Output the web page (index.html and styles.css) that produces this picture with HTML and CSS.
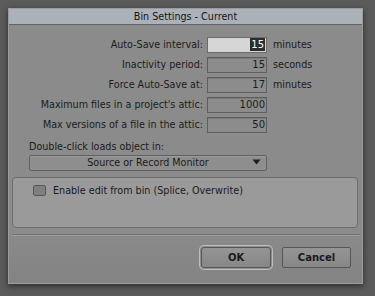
FILE: index.html
```html
<!DOCTYPE html>
<html>
<head>
<meta charset="utf-8">
<link rel="stylesheet" href="styles.css">
</head>
<body>
<div class="dialog">
  <div class="titlebar">Bin Settings - Current</div>
  <div class="content">
    <div class="fields">
      <div class="label">Auto-Save interval:</div>
      <div class="field active"><span class="sel">15</span></div>
      <div class="unit">minutes</div>

      <div class="label">Inactivity period:</div>
      <div class="field">15</div>
      <div class="unit">seconds</div>

      <div class="label">Force Auto-Save at:</div>
      <div class="field">17</div>
      <div class="unit">minutes</div>

      <div class="label">Maximum files in a project's attic:</div>
      <div class="field">1000</div>
      <div class="unit"></div>

      <div class="label">Max versions of a file in the attic:</div>
      <div class="field">50</div>
      <div class="unit"></div>
    </div>
    <div class="dbl-label">Double-click loads object in:</div>
    <div class="dropdown">
      <span>Source or Record Monitor</span>
      <svg class="arrow" width="9" height="6" viewBox="0 0 9 6"><path d="M0.5 0.5 H8.5 L4.5 5.5 Z" fill="#1e1e1e"/></svg>
    </div>
    <div class="group">
      <div class="check-row">
        <span class="checkbox"></span>
        <span class="check-label">Enable edit from bin (Splice, Overwrite)</span>
      </div>
    </div>
    <div class="separator"></div>
    <div class="footer">
      <div class="btn default">OK</div>
      <div class="btn">Cancel</div>
    </div>
  </div>
</div>
</body>
</html>
```
FILE: styles.css
```css
html, body {
  margin: 0;
  height: 296px;
  overflow: hidden;
}
body {
  background: #5b5b5b;
  padding: 8px 0 0 8px;
  box-sizing: border-box;
  font-family: "DejaVu Sans", sans-serif;
  font-size: 9.6px;
  color: #1b1b1b;
}
.dialog {
  width: 355px;
  height: 276px;
  box-sizing: border-box;
  border: 1px solid #9c9c9c;
  background: #8b8b8b;
  box-shadow: 0 2px 6px rgba(0,0,0,0.55);
  display: flex;
  flex-direction: column;
}
.titlebar {
  height: 15px;
  line-height: 15px;
  text-align: center;
  background: #aab1b9;
  border-bottom: 1px solid #5f6368;
  color: #151515;
}
.content {
  padding-top: 12px;
  flex: 1;
  display: flex;
  flex-direction: column;
}
.fields {
  display: grid;
  grid-template-columns: 194px 60px auto;
  grid-auto-rows: 16px;
  column-gap: 4px;
  row-gap: 4px;
}
.label {
  text-align: right;
  line-height: 16px;
}
.unit {
  line-height: 16px;
  padding-left: 2px;
}
.field {
  box-sizing: border-box;
  border: 1px solid #5e5e5e;
  background: #8c8c8c;
  box-shadow: inset 0 1px 0 #7a7a7a;
  text-align: right;
  padding-right: 1px;
  line-height: 14px;
  font-size: 10px;
}
.field.active {
  background: #d5d5d5;
  border-color: #6a6a6a;
  box-shadow: none;
}
.sel {
  background: #2c2c2c;
  color: #fff;
  padding: 1px 1px;
}
.dbl-label {
  margin: 8px 0 0 20px;
  line-height: 12px;
}
.dropdown {
  margin: 2px 0 0 20px;
  width: 238px;
  height: 16px;
  box-sizing: border-box;
  border: 1px solid #606060;
  border-radius: 2px;
  background: #8e8e8e;
  box-shadow: inset 0 1px 0 #999;
  text-align: center;
  line-height: 14px;
  position: relative;
}
.dropdown .arrow {
  position: absolute;
  right: 5px;
  top: 3px;
}
.group {
  margin: 6px 0 0 3px;
  width: 346px;
  height: 51px;
  box-sizing: border-box;
  border: 1px solid #6c6c6c;
  border-radius: 4px;
  background: #9a9a9a;
  padding: 6px 0 0 20px;
}
.check-row {
  display: flex;
  align-items: center;
  gap: 7px;
  height: 12px;
}
.checkbox {
  width: 13px;
  height: 11px;
  box-sizing: border-box;
  border: 1px solid #585858;
  border-radius: 2px;
  background: #7f7f7f;
}
.separator {
  margin: 6px 0 0 3px;
  width: 348px;
  height: 0;
  border-top: 1px solid #747474;
  border-bottom: 1px solid #9e9e9e;
}
.footer {
  flex: 1;
  display: flex;
  justify-content: flex-end;
  gap: 11px;
  padding: 11px 11px 0 0;
  background: linear-gradient(#8a8a8a, #838383);
}
.btn {
  width: 69px;
  height: 21px;
  box-sizing: border-box;
  border: 1px solid #555;
  border-radius: 2px;
  background: linear-gradient(#959595, #878787);
  text-align: center;
  line-height: 19px;
  font-weight: bold;
  font-size: 10px;
  color: #1a1a1a;
}
.btn.default {
  width: 70px;
  box-shadow: 0 0 0 1px #8f8f8f, 0 0 0 2px #bdbdbd;
  border-radius: 3px;
}
```
